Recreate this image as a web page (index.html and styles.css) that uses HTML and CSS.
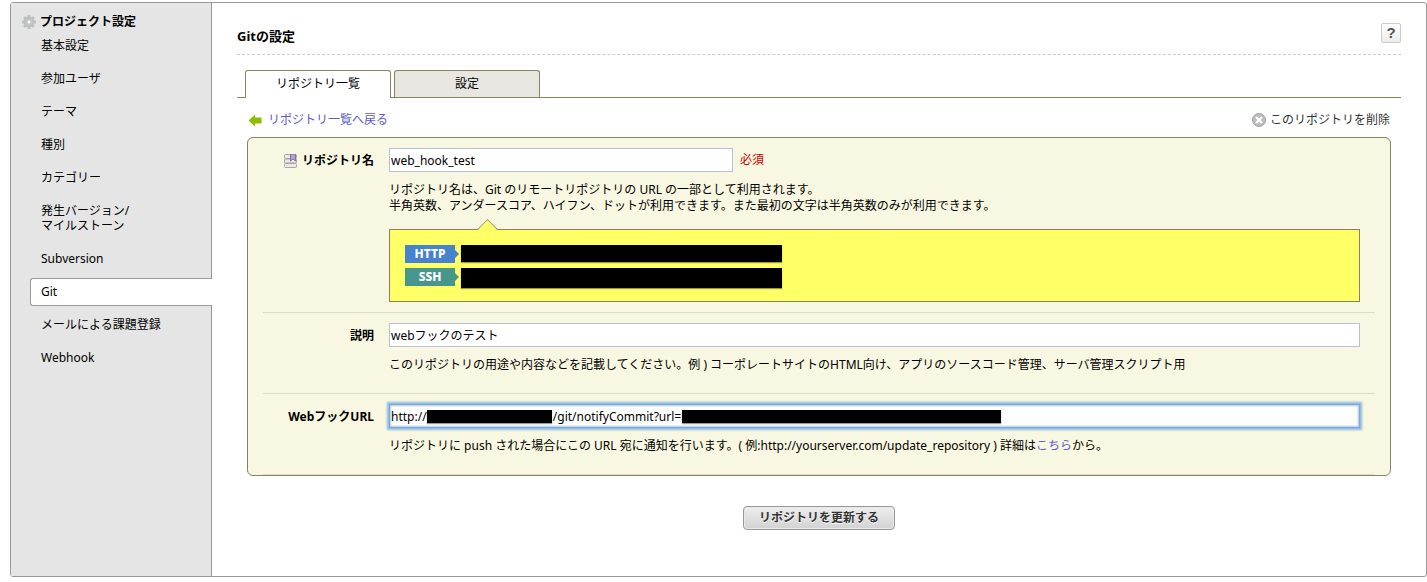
FILE: index.html
```html
<!DOCTYPE html>
<html lang="ja">

<head>
  <meta charset="UTF-8">
  <meta name="viewport" content="width=device-width, initial-scale=1.0">
  <title>Gitの設定</title>
  <link rel="stylesheet" href="styles.css">
</head>

<body>
  <div class="container">
    <aside class="sidebar">
      <h2 class="sidebar-title">
        <svg class="icon" width="14" height="14" viewBox="0 0 14 14">
          <g fill="#bdbfbf">
            <circle cx="7" cy="7" r="5.2"/>
            <rect x="5.5" y="0" width="3" height="14" rx="0.6"/>
            <rect x="5.5" y="0" width="3" height="14" rx="0.6" transform="rotate(45 7 7)"/>
            <rect x="5.5" y="0" width="3" height="14" rx="0.6" transform="rotate(90 7 7)"/>
            <rect x="5.5" y="0" width="3" height="14" rx="0.6" transform="rotate(135 7 7)"/>
          </g>
          <circle cx="7" cy="7" r="3" fill="#c9cbcb"/>
          <circle cx="7" cy="7" r="1.3" fill="#fff"/>
        </svg>
        プロジェクト設定
      </h2>
      <ul class="menu">
        <li><a href="#">基本設定</a></li>
        <li><a href="#">参加ユーザ</a></li>
        <li><a href="#">テーマ</a></li>
        <li><a href="#">種別</a></li>
        <li><a href="#">カテゴリー</a></li>
        <li><a href="#">発生バージョン/<br>マイルストーン</a></li>
        <li><a href="#">Subversion</a></li>
        <li><a href="#" class="active">Git</a></li>
        <li><a href="#">メールによる課題登録</a></li>
        <li><a href="#">Webhook</a></li>
      </ul>
    </aside>

    <main class="main">
      <header class="header">
        <h1>Gitの設定</h1>
        <button type="button" class="help">?</button>
      </header>

      <nav class="tabs">
        <a href="#" class="tab current">リポジトリ一覧</a>
        <a href="#" class="tab">設定</a>
      </nav>

      <div class="actions">
        <a href="#" class="back">
          <svg class="icon" width="14" height="13" viewBox="0 0 14 13">
            <path d="M0.5 6.5 L7 0.5 V3.5 H13.5 V9.5 H7 V12.5 Z" fill="#8fbc00"/>
          </svg>
          リポジトリ一覧へ戻る
        </a>
        <a href="#" class="delete">
          <svg class="icon" width="14" height="14" viewBox="0 0 14 14">
            <circle cx="7" cy="7" r="6.5" fill="#bcbcbc" stroke="#a3a3a3"/>
            <path d="M4 4 L10 10 M10 4 L4 10" stroke="#fff" stroke-width="2.4"/>
          </svg>
          このリポジトリを削除
        </a>
      </div>

      <form>
        <div class="panel">
          <div class="row">
            <label class="label" for="name">
              <svg class="icon" width="14" height="14" viewBox="0 0 14 14">
                <g fill="#e9e9e6" stroke="#a5a5a3">
                  <rect x="0.5" y="0.5" width="12" height="4" rx="1"/>
                  <rect x="0.5" y="5" width="12" height="4" rx="1"/>
                  <rect x="0.5" y="9.5" width="12" height="4" rx="1"/>
                </g>
                <path d="M6.5 0 H11.5 V7 L9 5 L6.5 7 Z" fill="#b5a0cf" stroke="#8670a3"/>
              </svg>
              リポジトリ名
            </label>
            <div class="field">
              <div class="line">
                <input type="text" id="name" class="short" value="web_hook_test">
                <span class="required">必須</span>
              </div>
              <p>リポジトリ名は、Git のリモートリポジトリの URL の一部として利用されます。<br>半角英数、アンダースコア、ハイフン、ドットが利用できます。また最初の文字は半角英数のみが利用できます。</p>
              <ul class="callout">
                <li><span class="tag http">HTTP</span><span class="mask"></span></li>
                <li><span class="tag ssh">SSH</span><span class="mask tall"></span></li>
              </ul>
            </div>
          </div>

          <div class="row">
            <label class="label" for="description">説明</label>
            <div class="field">
              <input type="text" id="description" value="webフックのテスト">
              <p>このリポジトリの用途や内容などを記載してください。例 ) コーポレートサイトのHTML向け、アプリのソースコード管理、サーバ管理スクリプト用</p>
            </div>
          </div>

          <div class="row">
            <label class="label" for="hook">WebフックURL</label>
            <div class="field">
              <div class="url">
                <input type="text" id="hook" class="focused" value="http://&emsp;&emsp;&emsp;&emsp;&emsp;&emsp;&emsp;&emsp;&emsp;&emsp;&nbsp;&nbsp;/git/notifyCommit?url=" autofocus>
                <span class="mask host"></span>
                <span class="mask query"></span>
              </div>
              <p>リポジトリに push された場合にこの URL 宛に通知を行います。( 例:http://yourserver.com/update_repository ) 詳細は<a href="#">こちら</a>から。</p>
            </div>
          </div>
        </div>

        <div class="submit">
          <button type="submit">リポジトリを更新する</button>
        </div>
      </form>
    </main>
  </div>
</body>

</html>
```
FILE: styles.css
```css
* {
  box-sizing: border-box;
}

body {
  margin: 0;
  padding: 2px 0 5px 10px;
  background: #fff;
  color: #000;
  font: 12px/16px "Noto Sans", "Noto Sans CJK JP", sans-serif;
}

h1, h2, p, ul {
  margin: 0;
  padding: 0;
}

ul {
  list-style: none;
}

a {
  color: #6059cb;
  text-decoration: none;
}

input, button {
  font: inherit;
}

.icon {
  flex: none;
}

.container {
  display: flex;
  border: 1px solid #999;
  border-radius: 3px;
}

/* サイドバー */
.sidebar {
  flex: none;
  width: 201px;
  padding: 9px 0 0;
  border-right: 1px solid #999;
  background: #e5e5e5;
}

.sidebar-title {
  display: flex;
  align-items: center;
  gap: 4px;
  padding-left: 11px;
  font-size: 12px;
  line-height: 20px;
}

.menu {
  display: flex;
  flex-direction: column;
  gap: 5px;
  padding-left: 19px;
}

.menu a {
  display: block;
  padding: 5px 10px 6px;
  border: 1px solid transparent;
  border-right: none;
  color: #000;
  line-height: 15px;
}

.menu .active {
  margin-right: -1px;
  border-color: #999;
  border-radius: 3px 0 0 3px;
  background: #fff;
}

/* メイン */
.main {
  flex: 1;
  min-width: 0;
  padding: 20px 25px 46px;
}

.header {
  display: flex;
  justify-content: space-between;
  align-items: flex-end;
  padding-bottom: 11px;
  border-bottom: 1px dashed #ccc;
}

.header h1 {
  font-size: 13px;
  line-height: 14px;
}

.help {
  width: 20px;
  height: 20px;
  padding: 0;
  border: 1px solid #ccc;
  border-radius: 2px;
  background: linear-gradient(#fff, #ececec);
  color: #555;
  font: bold 15px/18px "Liberation Sans", sans-serif;
}

.tabs {
  display: flex;
  gap: 3px;
  margin-top: 15px;
  padding-left: 8px;
  border-bottom: 1px solid #87825f;
}

.tab {
  width: 146px;
  height: 27px;
  border: 1px solid #87825f;
  border-bottom: none;
  border-radius: 3px 3px 0 0;
  background: #e7e6e1;
  color: #000;
  line-height: 26px;
  text-align: center;
}

.tab.current {
  height: 28px;
  margin-bottom: -1px;
  background: #fff;
}

.actions {
  display: flex;
  justify-content: space-between;
  padding: 13px 11px 8px;
  line-height: 18px;
}

.back, .delete {
  display: flex;
  align-items: center;
}

.back {
  gap: 6px;
}

.delete {
  gap: 4px;
  color: #333;
}

.panel {
  margin: 0 10px;
  padding: 0 15px;
  border: 1px solid #87825f;
  border-radius: 6px;
  background: #f8f7e1;
}

.row {
  display: flex;
  gap: 15px;
  padding: 10px 15px 20px 0;
  border-bottom: 1px solid #dddcc8;
}

.row:first-child {
  padding-bottom: 10px;
}

.label {
  display: flex;
  align-items: center;
  justify-content: flex-end;
  gap: 4px;
  width: 111px;
  height: 26px;
  font-weight: bold;
}

.field {
  flex: 1;
  min-width: 0;
}

.field input {
  display: block;
  width: 100%;
  height: 24px;
  padding: 0 1px;
  border: 1px solid #b8c1d4;
  background: #fff;
  color: #000;
}

.field .short {
  width: 344px;
}

.field .focused {
  border-color: #7ba9d9;
  outline: none;
  box-shadow: 0 0 2px 2px #8db9e0, inset 0 0 2px 1px #a9cbeb;
}

.field p {
  margin-top: 10px;
}

.line {
  display: flex;
  align-items: center;
  gap: 7px;
}

.required {
  color: #c00;
}

.callout {
  position: relative;
  display: flex;
  flex-direction: column;
  gap: 5px;
  margin-top: 15px;
  padding: 15px 15px 13px;
  border: 1px solid #87825f;
  background: #ff6;
}

.callout::before {
  content: "";
  position: absolute;
  top: -8px;
  left: 90px;
  width: 14px;
  height: 14px;
  border: 1px solid #a5a069;
  border-right: none;
  border-bottom: none;
  background: linear-gradient(135deg, #ff6 50%, transparent 50%);
  transform: rotate(45deg);
}

.callout li {
  display: flex;
  gap: 6px;
}

.tag {
  position: relative;
  width: 50px;
  height: 18px;
  color: #fff;
  font-weight: 800;
  line-height: 18px;
  text-align: center;
}

.tag::after {
  content: "";
  position: absolute;
  top: 5px;
  left: 50px;
  border: 4px solid transparent;
  border-right: none;
  border-left-color: inherit;
}

.http {
  border-color: #4682cd;
  background: #4682cd;
}

.ssh {
  border-color: #47968e;
  background: #47968e;
}

.mask {
  width: 321px;
  height: 17px;
  background: #000;
  box-shadow: 0 1px 1px rgba(0, 0, 0, 0.4);
}

.mask.tall {
  height: 20px;
}

/* URL欄の伏せ字 */
.url {
  position: relative;
}

.url .mask {
  position: absolute;
  top: 6px;
  height: 13px;
}

.url .host {
  left: 38px;
  width: 125px;
}

.url .query {
  left: 293px;
  width: 319px;
}

.submit {
  display: flex;
  justify-content: center;
  margin-top: 30px;
}

.submit button {
  height: 24px;
  padding: 0 15px;
  border: 1px solid #999;
  border-radius: 4px;
  background: linear-gradient(#eee, #d2d2d2);
  box-shadow: inset 0 0 0 1px #e8e8e8;
  color: #333;
  font-weight: bold;
  text-shadow: 0 1px 0 #fff;
}
```
